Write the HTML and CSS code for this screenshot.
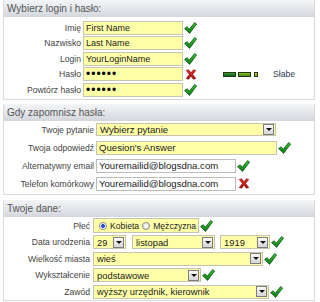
FILE: index.html
```html
<!DOCTYPE html>
<html lang="pl">

<head>
  <meta charset="UTF-8">
  <meta name="viewport" content="width=device-width, initial-scale=1.0">
  <title>Rejestracja</title>
  <link rel="stylesheet" href="styles.css">
</head>

<body>
  <svg class="sprite" xmlns="http://www.w3.org/2000/svg" aria-hidden="true">
    <defs>
      <linearGradient id="okFill" x1="0" y1="0" x2="0" y2="1">
        <stop offset="0" stop-color="#3fc43a" />
        <stop offset="1" stop-color="#0a7a12" />
      </linearGradient>
      <linearGradient id="badFill" x1="0" y1="0" x2="0" y2="1">
        <stop offset="0" stop-color="#e4302a" />
        <stop offset="1" stop-color="#a80c0c" />
      </linearGradient>
    </defs>
    <symbol id="ok" viewBox="0 0 13 12">
      <path d="M0.6 6.6 L3.2 4.8 L5.2 7.3 L10.6 0.6 L12.6 2 L5.6 11.4 Z" fill="url(#okFill)" stroke="#0a5410" stroke-width="0.8" stroke-linejoin="round" />
    </symbol>
    <symbol id="bad" viewBox="0 0 12 12">
      <path d="M0.8 1.6 L3.4 0.8 L6 4.2 L8.6 0.8 L11.2 1.6 L7.8 6 L11.2 10.4 L8.6 11.2 L6 7.8 L3.4 11.2 L0.8 10.4 L4.2 6 Z" fill="url(#badFill)" stroke="#7a0606" stroke-width="0.6" stroke-linejoin="round" />
    </symbol>
  </svg>

  <form class="page" autocomplete="off">

    <section class="box">
      <h2 class="box__title">Wybierz login i hasło:</h2>
      <div class="box__body box__body--login">
        <p class="row">
          <label class="row__label" for="imie">Imię</label>
          <input class="field field--w100" id="imie" value="First Name">
          <svg class="icon icon--ok"><use href="#ok" /></svg>
        </p>
        <p class="row">
          <label class="row__label" for="nazwisko">Nazwisko</label>
          <input class="field field--w100" id="nazwisko" value="Last Name">
          <svg class="icon icon--ok"><use href="#ok" /></svg>
        </p>
        <p class="row">
          <label class="row__label" for="login">Login</label>
          <input class="field field--w100" id="login" value="YourLoginName">
          <svg class="icon icon--ok"><use href="#ok" /></svg>
        </p>
        <p class="row">
          <label class="row__label" for="haslo">Hasło</label>
          <input class="field field--w100 field--pass" type="password" id="haslo" value="123456">
          <svg class="icon icon--bad"><use href="#bad" /></svg>
          <span class="meter">
            <span class="meter__bar meter__bar--1"></span>
            <span class="meter__bar meter__bar--2"></span>
            <span class="meter__bar meter__bar--3"></span>
          </span>
          <span class="meter__text">Słabe</span>
        </p>
        <p class="row">
          <label class="row__label" for="haslo2">Powtórz hasło</label>
          <input class="field field--w100 field--pass" type="password" id="haslo2" value="123456">
          <svg class="icon icon--ok"><use href="#ok" /></svg>
        </p>
      </div>
    </section>

    <section class="box">
      <h2 class="box__title">Gdy zapomnisz hasła:</h2>
      <div class="box__body box__body--remind">
        <p class="row">
          <label class="row__label" for="pytanie">Twoje pytanie</label>
          <span class="select select--w180 select--short">
            <select id="pytanie">
              <option selected>Wybierz pytanie</option>
            </select>
            <span class="select__btn"></span>
          </span>
        </p>
        <p class="row">
          <label class="row__label" for="odpowiedz">Twoja odpowiedź</label>
          <input class="field field--w180 field--big" id="odpowiedz" value="Quesion's Answer">
          <svg class="icon icon--ok"><use href="#ok" /></svg>
        </p>
        <p class="row">
          <label class="row__label" for="email">Alternatywny email</label>
          <input class="field field--w140 field--big field--plain" id="email" value="Youremailid@blogsdna.com">
          <svg class="icon icon--ok"><use href="#ok" /></svg>
        </p>
        <p class="row">
          <label class="row__label" for="telefon">Telefon komórkowy</label>
          <input class="field field--w140 field--big field--plain" id="telefon" value="Youremailid@blogsdna.com">
          <svg class="icon icon--bad"><use href="#bad" /></svg>
        </p>
      </div>
    </section>

    <section class="box">
      <h2 class="box__title">Twoje dane:</h2>
      <div class="box__body box__body--data">
        <div class="row">
          <span class="row__label">Płeć</span>
          <span class="radios">
            <label class="radios__item"><input type="radio" name="plec" checked>Kobieta</label>
            <label class="radios__item"><input type="radio" name="plec">Mężczyzna</label>
          </span>
          <svg class="icon icon--ok"><use href="#ok" /></svg>
        </div>
        <div class="row">
          <label class="row__label" for="dzien">Data urodzenia</label>
          <span class="select select--w33">
            <select id="dzien"><option selected>29</option></select>
            <span class="select__btn"></span>
          </span>
          <span class="select select--w83 select--gap">
            <select><option selected>listopad</option></select>
            <span class="select__btn"></span>
          </span>
          <span class="select select--w50 select--gap2">
            <select><option selected>1919</option></select>
            <span class="select__btn"></span>
          </span>
          <svg class="icon icon--ok"><use href="#ok" /></svg>
        </div>
        <div class="row">
          <label class="row__label" for="miasto">Wielkość miasta</label>
          <span class="select select--w170">
            <select id="miasto"><option selected>wieś</option></select>
            <span class="select__btn"></span>
          </span>
          <svg class="icon icon--ok"><use href="#ok" /></svg>
        </div>
        <div class="row">
          <label class="row__label" for="wyksztalcenie">Wykształcenie</label>
          <span class="select select--w108">
            <select id="wyksztalcenie"><option selected>podstawowe</option></select>
            <span class="select__btn"></span>
          </span>
          <svg class="icon icon--ok"><use href="#ok" /></svg>
        </div>
        <div class="row">
          <label class="row__label" for="zawod">Zawód</label>
          <span class="select select--w176">
            <select id="zawod"><option selected>wyższy urzędnik, kierownik</option></select>
            <span class="select__btn"></span>
          </span>
          <svg class="icon icon--ok"><use href="#ok" /></svg>
        </div>
      </div>
    </section>

  </form>
</body>

</html>
```

FILE: styles.css
```css
* {
  box-sizing: border-box;
}

body {
  margin: 0;
  background-color: #fff;
  color: #444;
  font-family: "Liberation Sans", Arial, sans-serif;
}

.sprite {
  position: absolute;
  width: 0;
  height: 0;
  overflow: hidden;
}

.page {
  margin: 0;
  padding: 0 5px 0 3px;
}

/* sekcje */

.box {
  border: 1px solid #dadada;
  border-top: 0;
}

.box + .box {
  margin-top: 4px;
}

.box:last-child {
  margin-top: 5px;
}

.box__title {
  margin: 0;
  height: 17px;
  padding-left: 3px;
  background: linear-gradient(#f4f5f7, #d3d7dd);
  color: #555;
  font-size: 10px;
  font-weight: normal;
  line-height: 17px;
}

.box__body {
  padding: 3px 0 1px;
}

.box__body--login {
  --label: 77px;
  --row: 15.5px;
}

.box__body--remind {
  --label: 90px;
  --row: 18px;
  padding-top: 0;
}

.box__body--data {
  --label: 86px;
  --row: 16.5px;
  padding-top: 1px;
  padding-bottom: 0;
}

.row {
  display: flex;
  align-items: center;
  height: var(--row);
  margin: 0;
}

.row__label {
  flex: none;
  width: var(--label);
  margin-right: 2px;
  color: #444;
  font-size: 8.6px;
  text-align: right;
  white-space: nowrap;
}

.box__body--data .row__label {
  margin-right: 3px;
}

/* pola */

.field {
  height: 14px;
  margin: 0;
  padding: 0 2px;
  border: 1px solid #c4c4b0;
  border-radius: 0;
  outline: none;
  background-color: #ffffa8;
  color: #222;
  font-family: "Liberation Sans", Arial, sans-serif;
  font-size: 9px;
}

.field--big {
  font-size: 9.6px;
}

.field--plain {
  border-color: #bcbcbc;
  background-color: #fff;
}

.field--pass {
  padding-left: 2px;
  color: #000;
  font-size: 12px;
  letter-spacing: 1px;
}

.field--w100 {
  width: 100px;
}

.field--w140 {
  width: 140px;
}

.field--w180 {
  width: 181px;
}

.icon {
  flex: none;
  width: 13px;
  height: 12px;
  margin-left: 1px;
}

.icon--bad {
  width: 12px;
  height: 11px;
  margin-left: 2px;
}

/* siła hasła */

.meter {
  display: flex;
  align-items: center;
  gap: 2px;
  margin-left: 26px;
}

.meter__bar {
  height: 5px;
  border: 1px solid #203a12;
}

.meter__bar--1 {
  width: 13px;
  background: linear-gradient(#3a9a34, #125e18);
}

.meter__bar--2 {
  width: 13px;
  background: linear-gradient(#8cbc1e, #4a8a10);
}

.meter__bar--3 {
  width: 4px;
  margin-left: 1px;
  background: linear-gradient(#c6d022, #8ea414);
}

.meter__text {
  margin-left: 15px;
  color: #2c3a52;
  font-size: 8.6px;
}

/* listy */

.select {
  display: flex;
  flex: none;
  align-items: center;
  height: 14px;
  padding: 0 1px 0 0;
  border: 1px solid #c4c4b0;
  background-color: #ffffa8;
}

.select--short {
  height: 13px;
}

.select select {
  flex: 1;
  min-width: 0;
  height: 100%;
  margin: 0;
  padding: 0 3px;
  border: 0;
  outline: none;
  background: transparent;
  color: #222;
  font-family: "Liberation Sans", Arial, sans-serif;
  font-size: 9.6px;
  appearance: none;
}

.box__body--data .select select {
  font-size: 9.4px;
}

.select__btn {
  position: relative;
  flex: none;
  width: 11px;
  height: 11px;
  border: 1px solid #7d7d7d;
  background: linear-gradient(#fbfbfb, #d6d6d6);
}

.select__btn::after {
  content: "";
  position: absolute;
  top: 3px;
  left: 2px;
  border-top: 3px solid #111;
  border-right: 3px solid transparent;
  border-left: 3px solid transparent;
}

.select--w33 {
  width: 33px;
}

.select--w50 {
  width: 50px;
}

.select--w83 {
  width: 83px;
}

.select--w108 {
  width: 108px;
}

.select--w170 {
  width: 170px;
}

.select--w176 {
  width: 176px;
}

.select--w180 {
  width: 180px;
}

.select--gap {
  margin-left: 6px;
}

.select--gap2 {
  margin-left: 5px;
}

/* płeć */

.radios {
  display: flex;
  flex: none;
  align-items: center;
  width: 106px;
  height: 15px;
  padding-left: 5px;
  border: 1px solid #c4c4b0;
  background-color: #ffffa8;
}

.radios__item {
  display: flex;
  align-items: center;
  color: #222;
  font-size: 8.6px;
  white-space: nowrap;
}

.radios__item + .radios__item {
  margin-left: 3px;
}

.radios__item input {
  flex: none;
  width: 8px;
  height: 8px;
  margin: 0 3px 0 0;
  border: 1px solid #8a8a8a;
  border-radius: 50%;
  background: radial-gradient(circle, #fff 0, #dedede 100%);
  appearance: none;
}

.radios__item input:checked {
  background: radial-gradient(circle, #2a4fd0 0 1.6px, #fff 2.2px, #e4e4e4 100%);
}
```
